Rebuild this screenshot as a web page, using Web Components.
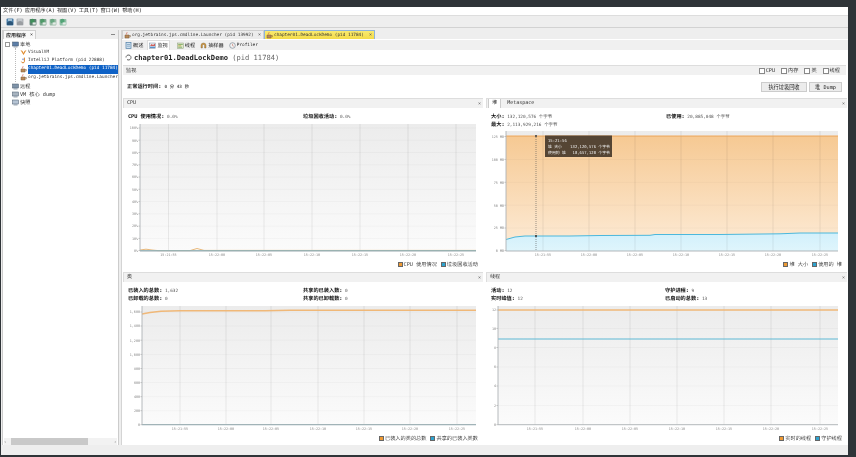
<!DOCTYPE html>
<html>
<head>
<meta charset="utf-8">
<title>VisualVM</title>
<style>
html, body { margin: 0; height: 100%; background: #2f3438; overflow: hidden; }
body { font-family: "DejaVu Sans Mono", "Noto Sans CJK SC", monospace; }
vm-panel i { font-style: normal; padding: 0 3px; }
vm-panel i.sel { background: #fff; border-left: 1px solid #ccc; border-right: 1px solid #ccc; margin: 0 3px 0 -2px; font-size: 5.2px; }
</style>
</head>
<body>
<vm-app>
  <vm-menubar slot="menu">
    <span>文件(F)</span><span>应用程序(A)</span><span>视图(V)</span><span>工具(T)</span><span>窗口(W)</span><span>帮助(H)</span>
  </vm-menubar>
  <vm-toolbar slot="tools"></vm-toolbar>
  <vm-tree slot="side"></vm-tree>
  <vm-doc-tabs slot="tabs"></vm-doc-tabs>
  <vm-sub-tabs slot="tabs"></vm-sub-tabs>
  <vm-heading slot="tabs"></vm-heading>
  <vm-monitor slot="main">
    <vm-panel style="grid-area:cpu" chart="cpu" cols="175px 1fr">
      <span slot="title">CPU</span>
      <vm-stat slot="stats" label="CPU 使用情况" value="0.0%"></vm-stat>
      <vm-stat slot="stats" label="垃圾回收活动" value="0.0%"></vm-stat>
    </vm-panel>
    <vm-panel style="grid-area:heap" chart="heap" cols="175px 1fr" tabs>
      <span slot="title"><i class="sel">堆</i><i>Metaspace</i></span>
      <vm-stat slot="stats" label="大小" value="132,120,576 个字节"></vm-stat>
      <vm-stat slot="stats" label="已使用" value="20,885,048 个字节"></vm-stat>
      <vm-stat slot="stats" label="最大" value="2,113,929,216 个字节"></vm-stat>
    </vm-panel>
    <vm-panel style="grid-area:cls" chart="classes" cols="175px 1fr">
      <span slot="title">类</span>
      <vm-stat slot="stats" label="已装入的总数" value="1,632"></vm-stat>
      <vm-stat slot="stats" label="共享的已装入数" value="0"></vm-stat>
      <vm-stat slot="stats" label="已卸载的总数" value="0"></vm-stat>
      <vm-stat slot="stats" label="共享的已卸载数" value="0"></vm-stat>
    </vm-panel>
    <vm-panel style="grid-area:thr" chart="threads" cols="174px 1fr">
      <span slot="title">线程</span>
      <vm-stat slot="stats" label="活动" value="12"></vm-stat>
      <vm-stat slot="stats" label="守护进程" value="9"></vm-stat>
      <vm-stat slot="stats" label="实时峰值" value="12"></vm-stat>
      <vm-stat slot="stats" label="已启动的总数" value="13"></vm-stat>
    </vm-panel>
  </vm-monitor>
</vm-app>

<script>
const MONO = '"DejaVu Sans Mono", "Noto Sans CJK SC", monospace';

// little java cup used in tabs and tree
const cup = `<svg width="7" height="7" viewBox="0 0 7 7"><path d="M1 3h4v3H1z" fill="#b98a58" stroke="#7b5b3a" stroke-width=".5"/><path d="M5 3.5h1.4v1.4H5" fill="none" stroke="#7b5b3a" stroke-width=".5"/><path d="M2.4 2.4C2 1.6 3.4 1.3 3 .3" fill="none" stroke="#d2503a" stroke-width=".7"/></svg>`;

class VmApp extends HTMLElement {
  constructor() {
    super();
    this.attachShadow({ mode: 'open' }).innerHTML = `
      <style>
        :host { display: block; margin: 7px 8px 2px 1px; height: 448px; background: #eeeeee; color: #222;
          font-family: ${MONO}; filter: blur(.3px); text-rendering: geometricPrecision; }
        .body { display: grid; grid-template-columns: 117px 727px; column-gap: 2px; padding: 2px 0 0 1px; height: 415px; }
        .right { display: flex; flex-direction: column; background: #fff; border-left: 1px solid #d4d4d4; }
      </style>
      <slot name="menu"></slot>
      <slot name="tools"></slot>
      <div class="body">
        <slot name="side"></slot>
        <div class="right"><slot name="tabs"></slot><slot name="main"></slot></div>
      </div>`;
  }
}

class VmMenubar extends HTMLElement {
  constructor() {
    super();
    this.attachShadow({ mode: 'open' }).innerHTML = `
      <style>
        :host { display: flex; gap: 2px; height: 8px; padding-left: 2px; background: #fff; font-size: 5.2px; line-height: 8px; color: #222; }
        ::slotted(span) { white-space: nowrap; }
      </style><slot></slot>`;
  }
}

class VmToolbar extends HTMLElement {
  constructor() {
    super();
    const save = (a, b, c) => `<svg width="8" height="8" viewBox="0 0 8 8"><rect x=".5" y=".5" width="7" height="7" rx="1" fill="${a}"/><path d="M1 7V4.5L4 3l3 1.5V7z" fill="${b}"/><rect x="2" y="1.2" width="4" height="1.6" fill="${c}"/></svg>`;
    const app = (a, b) => `<svg width="8" height="8" viewBox="0 0 8 8"><rect x=".6" y="1" width="6.8" height="6.4" rx=".8" fill="${a}"/><circle cx="3.4" cy="3" r="2.2" fill="${b}"/><rect x="3.6" y="4.4" width="3.2" height="2.2" fill="#e4ebe6"/></svg>`;
    this.attachShadow({ mode: 'open' }).innerHTML = `
      <style>
        :host { display: flex; align-items: center; height: 11px; padding-left: 5px; background: #eeeeee; border-bottom: 1px solid #d2d2d2; border-top: 1px solid #ddd; }
        svg { margin-right: 2px; }
        .sep { width: 3px; }
      </style>
      ${save('#4b7fa8', '#2c5578', '#b8d0e2')}${save('#b2b6ba', '#9a9ea2', '#c8ccd0')}<span class="sep"></span>
      ${app('#5d7f72', '#3f8f5a')}${app('#7da78f', '#4f9a68')}${app('#9bbca8', '#6aa882')}${app('#8fbfa6', '#52a476')}`;
  }
}

class VmTree extends HTMLElement {
  constructor() {
    super();
    const row = (cls, ic, txt) => `<div class="row ${cls}">${ic}<span>${txt}</span></div>`;
    const node = c => `<svg width="7" height="7" viewBox="0 0 7 7"><rect x=".5" y="1" width="6" height="4" fill="${c}" stroke="#46586c" stroke-width=".5"/><rect x="1.5" y="5.4" width="4" height="1" fill="#8796a6"/></svg>`;
    const vvm = `<svg width="7" height="7" viewBox="0 0 7 7"><path d="M.5 1l3 5 3-5-2 1-1 2-1-2z" fill="#e08a2c"/></svg>`;
    const jb = `<svg width="7" height="7" viewBox="0 0 7 7"><path d="M4.4.6v4c0 1.6-2.8 1.6-3 0" fill="none" stroke="#d9822b" stroke-width="1"/><path d="M2 2.2h2" stroke="#5b7fd0" stroke-width=".8"/></svg>`;
    this.attachShadow({ mode: 'open' }).innerHTML = `
      <style>
        :host { display: flex; flex-direction: column; height: 415px; background: #fff; border-right: 1px solid #ccc; border-left: 1px solid #ccc; font-size: 4.4px; color: #333; }
        .head { display: flex; align-items: center; justify-content: space-between; height: 9px; background: #eee; padding-right: 3px; }
        .tab { display: flex; align-items: center; gap: 4px; height: 9px; padding: 0 2px; background: #f8f8f8; border: 1px solid #d0d0d0; border-bottom: 0; box-sizing: border-box; font-size: 5px; font-weight: 700; }
        .min { width: 4px; height: 1px; background: #888; }
        .tree { flex: 1; padding-top: 1px; position: relative; }
        .row { display: flex; align-items: center; gap: 1px; height: 8.4px; white-space: nowrap; overflow: hidden; }
        .l1 { padding-left: 9px; font-size: 5.2px; }
        .l2 { padding-left: 17px; }
        .sel span { background: #0f62c6; color: #fff; flex: 1; line-height: 8.4px; }
        .plus { position: absolute; left: 2px; top: 3px; width: 3px; height: 3px; border: 1px solid #999; background: #fff; }
        .branch { position: absolute; left: 12px; top: 9px; bottom: auto; height: 34px; width: 0; border-left: 1px dotted #bbb; }
        .bar { display: flex; align-items: center; height: 7px; margin: 0 1px; background: #f2f2f2; font-size: 4px; color: #666; }
        .thumb { width: 78px; height: 7px; background: #c9c9c9; margin: 0 26px 0 4px; }
        .bar i { width: 3px; font-style: normal; }
      </style>
      <div class="head"><div class="tab">应用程序<span style="font-weight:400">×</span></div><div class="min"></div></div>
      <div class="tree">
        <div class="plus"></div><div class="branch"></div>
        ${row('l1', node('#5d7fa8'), '本地')}
        ${row('l2', vvm, 'VisualVM')}
        ${row('l2', jb, 'IntelliJ Platform (pid 22888)')}
        ${row('l2 sel', cup, 'chapter01.DeadLockDemo (pid 11784)')}
        ${row('l2', cup, 'org.jetbrains.jps.cmdline.Launcher')}
        ${row('l1', node('#7f93a8'), '远程')}
        ${row('l1', node('#a8b4c0'), 'VM 核心 dump')}
        ${row('l1', node('#b6c4d4'), '快照')}
      </div>
      <div class="bar"><i>‹</i><div class="thumb"></div><i>›</i></div>`;
  }
}

class VmDocTabs extends HTMLElement {
  constructor() {
    super();
    this.attachShadow({ mode: 'open' }).innerHTML = `
      <style>
        :host { display: flex; align-items: flex-end; height: 9px; background: #eee; font-size: 4.4px; color: #333; white-space: nowrap; }
        .t { display: flex; align-items: center; gap: 2px; height: 9px; box-sizing: border-box; padding: 0 2px 0 1px; border: 1px solid #cfcfcf; border-bottom: 0; justify-content: space-between; }
        .a { width: 142px; background: #ececec; }
        .b { width: 111px; background: linear-gradient(#f8ea70, #f4dc48); border-color: #8fb4d8; }
        .l { display: flex; align-items: center; gap: 1px; }
        .x { font-size: 5px; color: #555; }
      </style>
      <div class="t a"><span class="l">${cup}org.jetbrains.jps.cmdline.Launcher (pid 13992)</span><span class="x">×</span></div>
      <div class="t b"><span class="l">${cup}chapter01.DeadLockDemo (pid 11784)</span><span class="x">×</span></div>`;
  }
}

class VmSubTabs extends HTMLElement {
  constructor() {
    super();
    const overview = `<svg width="7" height="7" viewBox="0 0 7 7"><rect x="1" y=".5" width="5" height="6" fill="#cfe0ee" stroke="#4f7ea6" stroke-width=".7"/><path d="M2 2.5h3M2 4.2h3" stroke="#4f7ea6" stroke-width=".5"/></svg>`;
    const monitor = `<svg width="7" height="7" viewBox="0 0 7 7"><rect x=".5" y="1" width="6" height="5.4" fill="#e8eef4" stroke="#7a8ea2" stroke-width=".5"/><path d="M1 4l1.5-2 1.5 1 2-1.5V4z" fill="#d0605a"/><path d="M1 6V4.6h5V6z" fill="#5a90c8"/></svg>`;
    const threads = `<svg width="7" height="7" viewBox="0 0 7 7"><rect x=".5" y="1" width="6" height="5.4" fill="#e4ecd0" stroke="#8a9a78" stroke-width=".5"/><path d="M1.2 2.4h4.6" stroke="#6aa050" stroke-width=".8"/><path d="M1.2 3.8h3" stroke="#c0a040" stroke-width=".8"/><path d="M1.2 5.2h4" stroke="#6aa050" stroke-width=".8"/></svg>`;
    const sampler = `<svg width="7" height="7" viewBox="0 0 7 7"><path d="M1 6V3.5a2.5 2.5 0 0 1 5 0V6H4.6V3.5a1.1 1.1 0 0 0-2.2 0V6z" fill="#d99a3c" stroke="#6b5a3a" stroke-width=".4"/></svg>`;
    const profiler = `<svg width="7" height="7" viewBox="0 0 7 7"><circle cx="3.5" cy="3.5" r="2.8" fill="#f2f2f2" stroke="#6c7a88" stroke-width=".6"/><path d="M3.5 1.8v1.8l1.3.7" fill="none" stroke="#b85a4a" stroke-width=".5"/></svg>`;
    this.attachShadow({ mode: 'open' }).innerHTML = `
      <style>
        :host { display: flex; align-items: stretch; gap: 3px; height: 10px; margin-top: 1px; padding-left: 2px; background: #f0f0f0; font-size: 5.2px; color: #222; white-space: nowrap; }
        div { display: flex; align-items: center; gap: 1px; padding: 0 1px; }
        .on { background: #fff; border: 1px solid #ddd; border-bottom: 0; box-sizing: border-box; }
        .p { font-size: 4.4px; }
      </style>
      <div>${overview}概述</div>
      <div class="on">${monitor}监视</div>
      <div style="margin-left:3px">${threads}线程</div>
      <div>${sampler}抽样器</div>
      <div class="p">${profiler}Profiler</div>`;
  }
}

class VmHeading extends HTMLElement {
  constructor() {
    super();
    this.attachShadow({ mode: 'open' }).innerHTML = `
      <style>
        :host { display: flex; align-items: center; gap: 2px; height: 15px; padding-left: 3px; background: #fff; font-size: 7.1px; white-space: nowrap; }
        b { color: #222; } span { color: #666; }
      </style>
      <svg width="7" height="7" viewBox="0 0 7 7"><path d="M1 3.5a2.5 2.5 0 1 1 1 2" fill="none" stroke="#555" stroke-width=".9"/></svg>
      <div><b>chapter01.DeadLockDemo</b> <span>(pid 11784)</span></div>`;
  }
}

class VmStat extends HTMLElement {
  constructor() {
    super();
    this.attachShadow({ mode: 'open' }).innerHTML = `
      <style>
        :host { display: block; height: 8px; line-height: 8px; white-space: nowrap; color: #555; font-size: 4.4px; }
        b { font-size: 5.2px; color: #111; }
      </style>
      <b>${this.getAttribute('label')}:</b> ${this.getAttribute('value')}`;
  }
}

class VmMonitor extends HTMLElement {
  constructor() {
    super();
    const chk = t => `<label><i></i>${t}</label>`;
    this.attachShadow({ mode: 'open' }).innerHTML = `
      <style>
        :host { display: block; padding-left: 1px; background: #fff; }
        .head { display: flex; align-items: center; justify-content: space-between; height: 10px; margin-right: 2px; padding: 0 6px 0 3px; background: #f1f1f1; border-top: 1px solid #ddd; box-sizing: border-box; font-size: 5.2px; color: #333; }
        .checks { display: flex; gap: 6px; }
        label { display: flex; align-items: center; gap: 1px; }
        i { width: 4px; height: 4px; border: 1px solid #888; background: #fff; }
        .row { display: flex; align-items: center; height: 23px; padding: 0 6px 0 4px; gap: 2px; font-size: 5.2px; color: #222; }
        .up { flex: 1; } .up span { font-size: 4.4px; color: #555; }
        button { height: 10px; padding: 0; border: 1px solid #ccc; background: #ececec; font: inherit; color: #222; }
        .grid { display: grid; grid-template-columns: 360px 361px; grid-template-rows: 172px 172px; column-gap: 3px; row-gap: 2px;
          grid-template-areas: "cpu heap" "cls thr"; }
      </style>
      <div class="head"><span>监视</span><div class="checks">${chk('CPU')}${chk('内存')}${chk('类')}${chk('线程')}</div></div>
      <div class="row"><b class="up">正常运行时间: <span>0 分 43 秒</span></b>
        <button style="width:46px">执行垃圾回收</button><button style="width:33px">堆 Dump</button></div>
      <div class="grid"><slot></slot></div>`;
  }
}

const TIMES = ['15:21:55', '15:22:00', '15:22:05', '15:22:10', '15:22:15', '15:22:20', '15:22:25'];
// page coordinates, the chart shifts them by its own origin
const CHARTS = {
  cpu: {
    ox: 123, oy: 121, l: 140, t: 124, r: 476, b: 251,
    yt: ['100%', 128, '90%', 140.2, '80%', 152.5, '70%', 164.8, '60%', 177, '50%', 189.3, '40%', 201.6, '30%', 213.8, '20%', 226.1, '10%', 238.4, '0%', 250.6],
    xs: [168.5, 217, 264, 312, 360, 408, 456],
    lines: [
      { c: '#e8b87a', d: 'M140 250 L146 249.2 L152 250 L158 250.6 H190 L197 248.5 L204 250.4 H476', w: 1 },
      { c: '#74aeb8', d: 'M140 250.7 H476', w: 1 },
    ],
    legend: ['CPU 使用情况', '垃圾回收活动'],
  },
  heap: {
    ox: 486, oy: 129, l: 506, t: 131, r: 838, b: 251,
    yt: ['125 MB', 136.5, '100 MB', 159.4, '75 MB', 182.3, '50 MB', 205.2, '25 MB', 228, '0 MB', 250.7],
    xs: [543, 589, 635, 681, 727, 773, 820],
    fills: [
      { g: 'o', d: 'M506 136 H838 V251 H506 Z' },
      { g: 'b', d: 'M506 239.5 L515 237 L525 236 H570 L600 235.5 L650 235.3 L655 234.5 H720 L780 233.8 L800 233 H838 V251 H506 Z' },
    ],
    lines: [
      { c: '#f0a85c', d: 'M506 136 H838', w: 1 },
      { c: '#4cb8dc', d: 'M506 239.5 L515 237 L525 236 H570 L600 235.5 L650 235.3 L655 234.5 H720 L780 233.8 L800 233 H838', w: 1 },
    ],
    cross: 536,
    legend: ['堆 大小', '使用的 堆'],
  },
  classes: {
    ox: 123, oy: 303, l: 142, t: 306, r: 476, b: 424.7,
    yt: ['1,600', 312, '1,400', 326, '1,200', 340.2, '1,000', 354.4, '800', 368.5, '600', 382.6, '400', 396.7, '200', 410.7, '0', 424.7],
    xs: [180, 226, 271, 318, 364, 410, 457],
    lines: [
      { c: '#f0b878', d: 'M142 314 L150 312.5 L161 311.3 L180 310.8 H265 L290 310.2 H476', w: 1.4 },
      { c: '#74aeb8', d: 'M142 424.6 H476', w: 1 },
    ],
    legend: ['已装入的类的总数', '共享的已装入类数'],
  },
  threads: {
    ox: 486, oy: 303, l: 498, t: 306, r: 838, b: 424.7,
    yt: ['12', 310, '10', 328.4, '8', 347.5, '6', 367, '4', 386, '2', 405.5, '0', 424.7],
    xs: [535, 583, 630, 677, 724, 771, 820],
    lines: [
      { c: '#f0b878', d: 'M498 310 H838', w: 1.4 },
      { c: '#5cb8d4', d: 'M498 339 H838', w: 1 },
    ],
    legend: ['实时的线程', '守护线程'],
  },
};

class VmChart extends HTMLElement {
  constructor() {
    super();
    this.attachShadow({ mode: 'open' });
  }

  connectedCallback() {
    const c = CHARTS[this.getAttribute('name')];
    let s = '';
    s += `<rect x="${c.l}" y="${c.t}" width="${c.r - c.l}" height="${c.b - c.t}" fill="url(#bg)"/>`;
    (c.fills || []).forEach(f => { s += `<path d="${f.d}" fill="url(#${f.g})"/>`; });
    for (let i = 0; i < c.yt.length; i += 2) {
      const y = c.yt[i + 1];
      s += `<line x1="${c.l}" x2="${c.r}" y1="${y}" y2="${y}" stroke="#000" stroke-opacity=".04" stroke-width=".8"/>`;
      s += `<line x1="${c.l - 1.5}" x2="${c.l}" y1="${y}" y2="${y}" stroke="#888" stroke-width=".5"/>`;
      s += `<text x="${c.l - 2}" y="${y + 1.3}" text-anchor="end">${c.yt[i]}</text>`;
    }
    c.xs.forEach((x, i) => {
      s += `<line x1="${x}" x2="${x}" y1="${c.t}" y2="${c.b}" stroke="#000" stroke-opacity=".09" stroke-width=".8"/>`;
      s += `<text x="${x}" y="${c.b + 5}" text-anchor="middle">${TIMES[i]}</text>`;
    });
    c.lines.forEach(l => { s += `<path d="${l.d}" fill="none" stroke="${l.c}" stroke-width="${l.w}"/>`; });
    s += `<path d="M${c.l} ${c.t}V${c.b}H${c.r}" fill="none" stroke="#aeb2b6" stroke-width=".9"/>`;
    if (c.cross) {
      s += `<line x1="${c.cross}" x2="${c.cross}" y1="${c.t + 4}" y2="${c.b}" stroke="#555" stroke-width=".6" stroke-dasharray="1 1"/>`;
      s += `<circle cx="${c.cross}" cy="136" r="1" fill="#444"/><circle cx="${c.cross}" cy="236" r="1" fill="#333"/>`;
      s += `<rect x="545" y="135.5" width="67" height="21.5" fill="#4e3f30" fill-opacity=".96"/>`;
      s += `<g style="fill:#eee;font-size:3.9px">
        <text x="548" y="142">15:21:56</text>
        <text x="548" y="148">堆 大小</text><text x="610" y="148" text-anchor="end">132,120,576 个字节</text>
        <text x="548" y="154">使用的 堆</text><text x="610" y="154" text-anchor="end">18,657,128 个字节</text>
      </g>`;
    }
    this.shadowRoot.innerHTML = `
      <style>
        :host { display: flex; flex-direction: column; flex: 1; min-height: 0; }
        svg { flex: 1; min-height: 0; width: 100%; display: block; overflow: visible; font-family: ${MONO}; font-size: 3.4px; fill: #888; }
        .legend { display: flex; justify-content: flex-end; align-items: center; gap: 4px; height: 8px; margin: 0 5px 2px 0; font-size: 5.2px; color: #444; white-space: nowrap; }
        .legend span { display: flex; align-items: center; gap: 1px; }
        i { width: 3px; height: 3px; border: .5px solid #666; }
      </style>
      <svg>
        <defs>
          <linearGradient id="bg" x1="0" y1="0" x2="0" y2="1"><stop offset="0" stop-color="#ececec"/><stop offset="1" stop-color="#fbfbfb"/></linearGradient>
          <linearGradient id="o" x1="0" y1="0" x2="0" y2="1"><stop offset="0" stop-color="#f6c993"/><stop offset="1" stop-color="#fdecd8"/></linearGradient>
          <linearGradient id="b" x1="0" y1="0" x2="0" y2="1"><stop offset="0" stop-color="#d2f0fb"/><stop offset="1" stop-color="#dff5fc"/></linearGradient>
        </defs>
        <g transform="translate(${-c.ox} ${-c.oy})">${s}</g>
      </svg>
      <div class="legend">
        <span><i style="background:#ee9a34"></i>${c.legend[0]}</span>
        <span><i style="background:#2ea3cf"></i>${c.legend[1]}</span>
      </div>`;
  }
}

class VmPanel extends HTMLElement {
  constructor() {
    super();
    this.attachShadow({ mode: 'open' }).innerHTML = `
      <style>
        :host { display: flex; flex-direction: column; min-width: 0; background: #fff; }
        .head { display: flex; align-items: center; justify-content: space-between; height: 10px; flex: none; box-sizing: border-box; padding: 0 2px 0 3px; background: #f1f1f1; border-top: 1px solid #ddd; border-left: 1px solid #ddd; font-size: 5px; color: #333; }
        .x { color: #666; font-size: 5px; }
        ::slotted([slot=title]) { display: flex; align-items: stretch; height: 9px; line-height: 9px; }
        .stats { display: grid; padding: 5px 0 0 5px; flex: none; }
      </style>
      <div class="head"><slot name="title"></slot><span class="x">×</span></div>
      <div class="stats" style="grid-template-columns:${this.getAttribute('cols')}"><slot name="stats"></slot></div>
      <vm-chart name="${this.getAttribute('chart')}"></vm-chart>`;
  }
}

customElements.define('vm-chart', VmChart);
customElements.define('vm-app', VmApp);
customElements.define('vm-menubar', VmMenubar);
customElements.define('vm-toolbar', VmToolbar);
customElements.define('vm-tree', VmTree);
customElements.define('vm-doc-tabs', VmDocTabs);
customElements.define('vm-sub-tabs', VmSubTabs);
customElements.define('vm-heading', VmHeading);
customElements.define('vm-stat', VmStat);
customElements.define('vm-monitor', VmMonitor);
customElements.define('vm-panel', VmPanel);
</script>
</body>
</html>
